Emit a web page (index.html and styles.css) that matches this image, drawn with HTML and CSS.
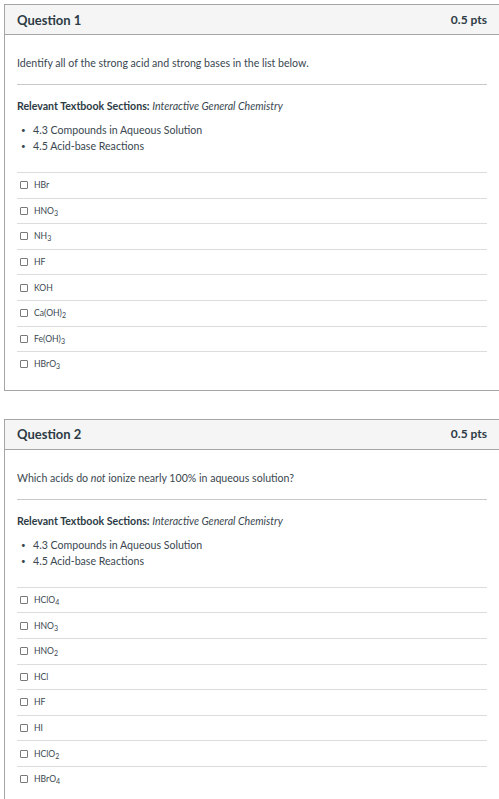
FILE: index.html
```html
<!DOCTYPE html>
<html lang="en">
<head>
<meta charset="utf-8">
<title>Quiz</title>
<link rel="stylesheet" href="styles.css">
</head>
<body>
<div class="page">
  <section class="card">
    <header class="card-head">
      <h2 class="q-title">Question 1</h2>
      <span class="q-pts">0.5 pts</span>
    </header>
    <div class="card-body">
      <p class="q-text">Identify all of the strong acid and strong bases in the list below.</p>
      <hr class="divider">
      <p class="rel"><strong>Relevant Textbook Sections:</strong> <em>Interactive General Chemistry</em></p>
      <ul class="sections">
        <li>4.3 Compounds in Aqueous Solution</li>
        <li>4.5 Acid-base Reactions</li>
      </ul>
      <div class="answers">
        <label class="answer"><span class="box"></span><span class="a-text">HBr</span></label>
        <label class="answer"><span class="box"></span><span class="a-text">HNO<sub>3</sub></span></label>
        <label class="answer"><span class="box"></span><span class="a-text">NH<sub>3</sub></span></label>
        <label class="answer"><span class="box"></span><span class="a-text">HF</span></label>
        <label class="answer"><span class="box"></span><span class="a-text">KOH</span></label>
        <label class="answer"><span class="box"></span><span class="a-text">Ca(OH)<sub>2</sub></span></label>
        <label class="answer"><span class="box"></span><span class="a-text">Fe(OH)<sub>3</sub></span></label>
        <label class="answer"><span class="box"></span><span class="a-text">HBrO<sub>3</sub></span></label>
      </div>
    </div>
  </section>

  <section class="card">
    <header class="card-head">
      <h2 class="q-title">Question 2</h2>
      <span class="q-pts">0.5 pts</span>
    </header>
    <div class="card-body">
      <p class="q-text">Which acids do <em>not</em> ionize nearly 100% in aqueous solution?</p>
      <hr class="divider">
      <p class="rel"><strong>Relevant Textbook Sections:</strong> <em>Interactive General Chemistry</em></p>
      <ul class="sections">
        <li>4.3 Compounds in Aqueous Solution</li>
        <li>4.5 Acid-base Reactions</li>
      </ul>
      <div class="answers">
        <label class="answer"><span class="box"></span><span class="a-text">HClO<sub>4</sub></span></label>
        <label class="answer"><span class="box"></span><span class="a-text">HNO<sub>3</sub></span></label>
        <label class="answer"><span class="box"></span><span class="a-text">HNO<sub>2</sub></span></label>
        <label class="answer"><span class="box"></span><span class="a-text">HCl</span></label>
        <label class="answer"><span class="box"></span><span class="a-text">HF</span></label>
        <label class="answer"><span class="box"></span><span class="a-text">HI</span></label>
        <label class="answer"><span class="box"></span><span class="a-text">HClO<sub>2</sub></span></label>
        <label class="answer"><span class="box"></span><span class="a-text">HBrO<sub>4</sub></span></label>
      </div>
    </div>
  </section>
</div>
</body>
</html>
```

FILE: styles.css
```css
html, body {
  margin: 0;
  padding: 0;
  overflow: hidden;
  background: #ffffff;
}

body {
  font-family: Lato, "Liberation Sans", sans-serif;
  color: #2d3b45;
}

.page {
  padding: 4px 0 0 4px;
  display: flex;
  flex-direction: column;
  gap: 28px;
}

.card {
  width: 496px;
  box-sizing: border-box;
  border: 1px solid #a5a5a5;
  background: #ffffff;
}

.card-head {
  height: 29px;
  box-sizing: content-box;
  background: #f5f5f5;
  border-bottom: 1px solid #a5a5a5;
  display: flex;
  align-items: center;
  justify-content: space-between;
  padding: 0 12px;
}

.q-title {
  margin: 0;
  font-size: 13px;
  font-weight: 700;
  line-height: 16px;
}

.q-pts {
  font-size: 12px;
  font-weight: 700;
  line-height: 16px;
}

.card-body {
  padding: 20px 12px 13px 12px;
}

.q-text {
  margin: 0;
  font-size: 10.6px;
  line-height: 16px;
  color: #3a4750;
}

.divider {
  margin: 13px 0 0 0;
  border: 0;
  border-top: 1px solid #c8c8c8;
  height: 0;
}

.rel {
  margin: 13px 0 0 0;
  font-size: 10.6px;
  line-height: 16px;
  color: #3a4750;
}

.rel strong {
  font-weight: 700;
  color: #2d3b45;
}

.sections {
  margin: 8px 0 0 0;
  padding: 0;
  list-style: none;
  font-size: 10.6px;
  line-height: 16px;
  color: #3a4750;
}

.sections li {
  display: flex;
  align-items: center;
  height: 16px;
}

.sections li::before {
  content: "\2022";
  font-size: 8px;
  line-height: 16px;
  width: 12px;
  padding-left: 4px;
  flex: none;
}

.answers {
  margin-top: 18px;
  display: flex;
  flex-direction: column;
}

.answer {
  height: 24.6px;
  border-top: 1px solid #dcdcdc;
  display: flex;
  align-items: center;
  font-size: 8.6px;
  line-height: 10px;
  color: #3a4750;
}

.box {
  width: 6px;
  height: 6px;
  border: 1px solid #7a7a7a;
  border-radius: 1px;
  margin: 0 6px 0 3px;
  flex: none;
}

.a-text sub {
  font-size: 7px;
  line-height: 0;
  vertical-align: -2px;
}
```
